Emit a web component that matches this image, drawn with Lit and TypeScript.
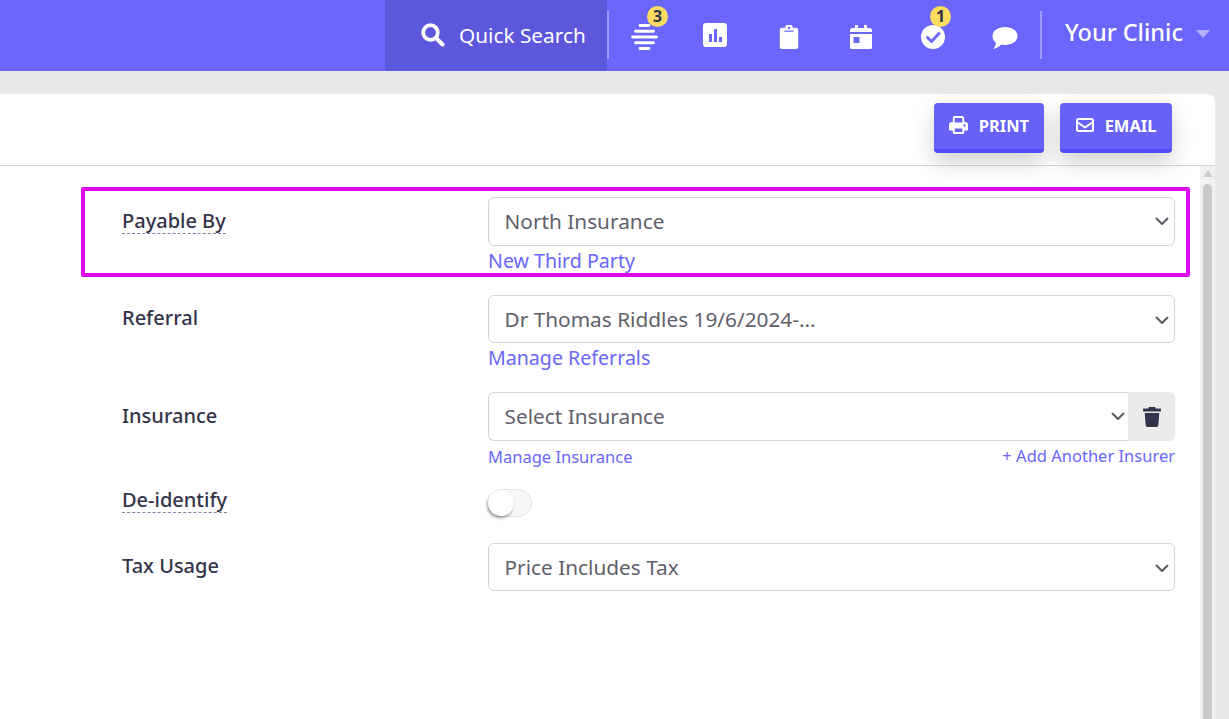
import { LitElement, html, css, svg } from "lit";
import { customElement } from "lit/decorators.js";

const chevron = html`<svg class="chev" viewBox="0 0 14 9" width="14" height="9"><path d="M1.5 1.5 7 7l5.5-5.5" fill="none" stroke="#5a5a66" stroke-width="2" stroke-linecap="round" stroke-linejoin="round"/></svg>`;

const icons = {
  search: svg`<circle cx="9.500" cy="9.500" r="7.300" fill="none" stroke="#fff" stroke-width="3.800"/><path d="M15 15l6.500 6.500" stroke="#fff" stroke-width="4" stroke-linecap="round"/>`,
  stripes: svg`<g stroke="#fff" stroke-width="2.800" stroke-linecap="round"><path d="M9 1.500h9M4.500 7.250h18M1.500 13h24M4.500 18.750h18M9 24.500h9"/></g>`,
  chart: svg`<path fill-rule="evenodd" fill="#fff" d="M3 0h18a3 3 0 0 1 3 3v18a3 3 0 0 1-3 3H3a3 3 0 0 1-3-3V3a3 3 0 0 1 3-3Zm3 11v8h3v-8Zm5-5v13h3V6Zm5 8v5h3v-5Z"/>`,
  clip: svg`<path fill-rule="evenodd" fill="#fff" d="M2.500 3H6a4 4 0 0 1 8 0h3.500A2.500 2.500 0 0 1 20 5.500v18a2.500 2.500 0 0 1-2.500 2.500h-15A2.500 2.500 0 0 1 0 23.500v-18A2.500 2.500 0 0 1 2.500 3ZM10 2a1.300 1.300 0 1 0 0 2.600A1.300 1.300 0 0 0 10 2ZM5 6v1.300h10V6Z"/>`,
  cal: svg`<path fill-rule="evenodd" fill="#fff" d="M5 0h3v3h6V0h3v3h2.500A2.500 2.500 0 0 1 22 5.500V7H0V5.500A2.500 2.500 0 0 1 2.500 3H5ZM0 9h22v13.500a1.500 1.500 0 0 1-1.500 1.500h-19A1.500 1.500 0 0 1 0 22.500Zm3.500 3v6h6v-6Z"/>`,
  check: svg`<circle cx="12" cy="12" r="12" fill="#fff"/><path d="M6.500 12.500l4 4 7.500-8" fill="none" stroke="#6a65fb" stroke-width="3" stroke-linecap="round" stroke-linejoin="round"/>`,
  chat: svg`<path fill="#fff" d="M13 0c7 0 12.500 3.800 12.500 9S20 18 13 18c-1.300 0-2.600-.1-3.800-.4C7.500 19.500 4.800 21.500 1 22c1.600-1.600 2.700-3.600 3-6C1.600 14.200.500 11.800.500 9 .5 3.800 6 0 13 0Z"/>`,
  print: svg`<path fill="#fff" fill-rule="evenodd" d="M4 1.500A1.500 1.500 0 0 1 5.500 0h8.800L16 1.700V6h1.500A2.500 2.500 0 0 1 20 8.500v5a1 1 0 0 1-1 1h-3v2A1.500 1.500 0 0 1 14.500 18h-9A1.500 1.500 0 0 1 4 16.500v-2H1a1 1 0 0 1-1-1v-5A2.500 2.500 0 0 1 2.500 6H4Zm2 .5v4.500h8V2.500L13.500 2Zm0 10.500V16h8v-3.500ZM16.300 8.300a1.200 1.200 0 1 0 0 2.400 1.200 1.200 0 0 0 0-2.400Z"/>`,
  mail: svg`<path fill="none" stroke="#fff" stroke-width="2" stroke-linejoin="round" d="M2.500 1h13A1.500 1.500 0 0 1 17 2.500v9a1.500 1.500 0 0 1-1.500 1.500h-13A1.500 1.500 0 0 1 1 11.500v-9A1.500 1.500 0 0 1 2.500 1Z"/><path fill="none" stroke="#fff" stroke-width="2" stroke-linejoin="round" d="M1 4l8 5.500L17 4"/>`,
  trash: svg`<path fill="#33334a" d="M6 0h6l.8 1.500H17a1 1 0 0 1 0 3H1a1 1 0 0 1 0-3h4.200ZM1.700 6h14.600l-1 12.300A1.800 1.800 0 0 1 13.500 20h-9a1.800 1.800 0 0 1-1.800-1.700Z"/>`,
};

@customElement("app-root")
export class AppRoot extends LitElement {
  static styles = css`
    :host {
      display: block;
      position: relative;
      width: 1229px;
      height: 719px;
      overflow: hidden;
      background: #e9e9e9;
      font-family: "Noto Sans", "Open Sans", sans-serif;
      color: #33334a;
    }
    .top {
      height: 71px;
      background: #6a65fb;
      display: flex;
      align-items: stretch;
      padding-left: 385px;
      color: #fff;
    }
    .search {
      width: 222px;
      background: #5d57db;
      display: flex;
      align-items: center;
      padding: 0 0 2px 36px;
      box-sizing: border-box;
      font-size: 20.800px;
    }
    .search svg { margin-right: 14px; }
    .sep {
      width: 2px;
      height: 48px;
      margin-top: 11px;
      background: rgba(255, 255, 255, 0.35);
    }
    .nav { display: flex; align-items: flex-start; }
    .ic { position: relative; display: block; margin-top: 25px; }
    .ic svg { display: block; }
    .i1 { margin-left: 22px; margin-top: 24px; }
    .i2 { margin-left: 45px; margin-top: 23px; }
    .i3 { margin-left: 52px; }
    .i4 { margin-left: 51px; }
    .i5 { margin-left: 49px; }
    .i6 { margin-left: 47px; margin-top: 27px; }
    .badge {
      position: absolute;
      width: 21px;
      height: 21px;
      border-radius: 50%;
      background: #fbdc5e;
      color: #33334a;
      font-size: 16px;
      font-weight: 700;
      line-height: 21px;
      text-align: center;
    }
    .b1 { left: 16px; top: -18px; }
    .b5 { left: 9px; top: -19px; }
    .sep2 { margin-left: 22px; }
    .clinic {
      font-size: 23.500px;
      font-weight: 500;
      margin-left: 23px;
      line-height: 64px;
      height: 64px;
    }
    .caret {
      margin-left: 13px;
      margin-top: 30px;
      width: 0;
      height: 0;
      border-left: 7.500px solid transparent;
      border-right: 7.500px solid transparent;
      border-top: 8px solid #b5b2fd;
    }
    .card {
      margin-top: 23px;
      width: 1215px;
      height: 625px;
      background: #fff;
      border-radius: 0 8px 0 0;
      display: flex;
      flex-direction: column;
    }
    .bar {
      height: 72px;
      box-sizing: border-box;
      padding: 9px 43px 0 0;
      border-bottom: 1px solid #d5d5d5;
      display: flex;
      justify-content: flex-end;
      gap: 16px;
      flex: none;
    }
    .btn {
      height: 50px;
      box-sizing: border-box;
      display: flex;
      align-items: center;
      gap: 11px;
      padding: 0 15px 2px;
      background: #6662f8;
      border-bottom: 4px solid #4f4bf5;
      border-radius: 4px;
      color: #fff;
      font-size: 16.500px;
      font-weight: 700;
      box-shadow: 0 10px 22px rgba(0, 0, 0, 0.18);
    }
    .btn.mail { padding: 0 15.500px 2px; }
    .body { flex: 1; display: flex; min-height: 0; }
    .form { flex: 1; padding: 31px 25px 0 122px; box-sizing: border-box; min-width: 0; }
    .row { display: grid; grid-template-columns: 366px 1fr; }
    .label {
      font-size: 20px;
      font-weight: 500;
      color: #33334a;
      justify-self: start;
      align-self: start;
      line-height: 24px;
      margin-top: 12px;
    }
    .r2 .label { margin-top: 11px; }
    .dash { border-bottom: 1px dashed #8080a0; line-height: 24px; }
    .sel {
      height: 49px;
      box-sizing: border-box;
      border: 1px solid #d4d4d4;
      border-radius: 6px;
      display: flex;
      align-items: center;
      justify-content: space-between;
      padding: 0 5px 2px 15.500px;
      font-size: 20.800px;
      color: #5f5f6b;
      flex: 1;
    }
    .chev { margin-top: 2px; }
    .sel.h48 { height: 48px; padding-bottom: 0; }
    .link {
      display: block;
      color: #6a65fb;
      font-size: 19.600px;
      line-height: 30px;
    }
    .r1, .r2 { margin-bottom: 19px; }
    .group { display: flex; }
    .group .sel { border-radius: 6px 0 0 6px; border-right: none; padding-right: 3px; }
    .trash {
      width: 47px;
      height: 49px;
      background: #ebebeb;
      border-radius: 0 6px 6px 0;
      display: flex;
      align-items: center;
      justify-content: center;
    }
    .sub { display: flex; justify-content: space-between; line-height: 32px; font-size: 16.500px; color: #6a65fb; }
    .sub span:last-child { margin-top: -1px; }
    .r3 { margin-bottom: 16px; }
    .r4 { height: 28px; margin-bottom: 26px; }
    .r4 .label { margin-top: -1px; }
    .toggle {
      width: 44px;
      height: 28px;
      box-sizing: border-box;
      border: 1px solid #e2e2e2;
      border-radius: 14px;
      background: #f7f7f7;
      position: relative;
    }
    .knob {
      position: absolute;
      left: -1px;
      top: 0;
      width: 26px;
      height: 26px;
      border-radius: 50%;
      background: #fff;
      box-shadow: -1px 2px 3px rgba(0, 0, 0, 0.4);
    }
    .r5 .label { margin-top: 11px; }
    .scroll { width: 15px; background: #f1f1f1; position: relative; flex: none; display: flex; flex-direction: column; align-items: center; }
    .arrow {
      margin-top: 4px;
      width: 0;
      height: 0;
      border-left: 5px solid transparent;
      border-right: 5px solid transparent;
      border-bottom: 7px solid #cfcfcf;
    }
    .thumb { margin-top: 7px; width: 9px; flex: 1; background: #c9c9c9; border-radius: 5px 5px 0 0; }
    .mark {
      position: absolute;
      left: 81px;
      top: 187px;
      width: 1109px;
      height: 90px;
      box-sizing: border-box;
      border: 4px solid #dd0cef;
      border-radius: 2px;
      pointer-events: none;
    }
  `;

  private icon(cls: string, w: number, h: number, vb: string, body: unknown, badge?: string, badgeCls?: string) {
    return html`<span class="ic ${cls}">
      <svg width=${w} height=${h} viewBox=${vb}>${body}</svg>
      ${badge ? html`<span class="badge ${badgeCls}">${badge}</span>` : ""}
    </span>`;
  }

  render() {
    return html`
      <div class="top">
        <div class="search">
          <svg width="24" height="24" viewBox="0 0 24 24">${icons.search}</svg>
          Quick Search
        </div>
        <div class="sep"></div>
        <div class="nav">
          ${this.icon("i1", 27, 26, "0 0 27 26", icons.stripes, "3", "b1")}
          ${this.icon("i2", 24, 24, "0 0 24 24", icons.chart)}
          ${this.icon("i3", 20, 24, "0 0 20 26", icons.clip)}
          ${this.icon("i4", 22, 24, "0 0 22 24", icons.cal)}
          ${this.icon("i5", 24, 24, "0 0 24 24", icons.check, "1", "b5")}
          ${this.icon("i6", 26, 22, "0 0 26 22", icons.chat)}
        </div>
        <div class="sep sep2"></div>
        <div class="clinic">Your Clinic</div>
        <div class="caret"></div>
      </div>
      <div class="card">
        <div class="bar">
          <div class="btn"><svg width="19" height="18" viewBox="0 0 20 18" preserveAspectRatio="none">${icons.print}</svg>PRINT</div>
          <div class="btn mail"><svg width="18" height="14" viewBox="0 0 18 14">${icons.mail}</svg>EMAIL</div>
        </div>
        <div class="body">
          <div class="form">
            <div class="row r1">
              <div class="label dash">Payable By</div>
              <div>
                <div class="sel">North Insurance ${chevron}</div>
                <span class="link">New Third Party</span>
              </div>
            </div>
            <div class="row r2">
              <div class="label">Referral</div>
              <div>
                <div class="sel h48">Dr Thomas Riddles 19/6/2024-... ${chevron}</div>
                <span class="link">Manage Referrals</span>
              </div>
            </div>
            <div class="row r3">
              <div class="label">Insurance</div>
              <div>
                <div class="group">
                  <div class="sel">Select Insurance ${chevron}</div>
                  <div class="trash"><svg width="18" height="20" viewBox="0 0 18 20">${icons.trash}</svg></div>
                </div>
                <div class="sub"><span>Manage Insurance</span><span>+ Add Another Insurer</span></div>
              </div>
            </div>
            <div class="row r4">
              <div class="label dash">De-identify</div>
              <div class="toggle"><div class="knob"></div></div>
            </div>
            <div class="row r5">
              <div class="label">Tax Usage</div>
              <div class="sel h48">Price Includes Tax ${chevron}</div>
            </div>
          </div>
          <div class="scroll"><div class="arrow"></div><div class="thumb"></div></div>
        </div>
      </div>
      <div class="mark"></div>
    `;
  }
}
